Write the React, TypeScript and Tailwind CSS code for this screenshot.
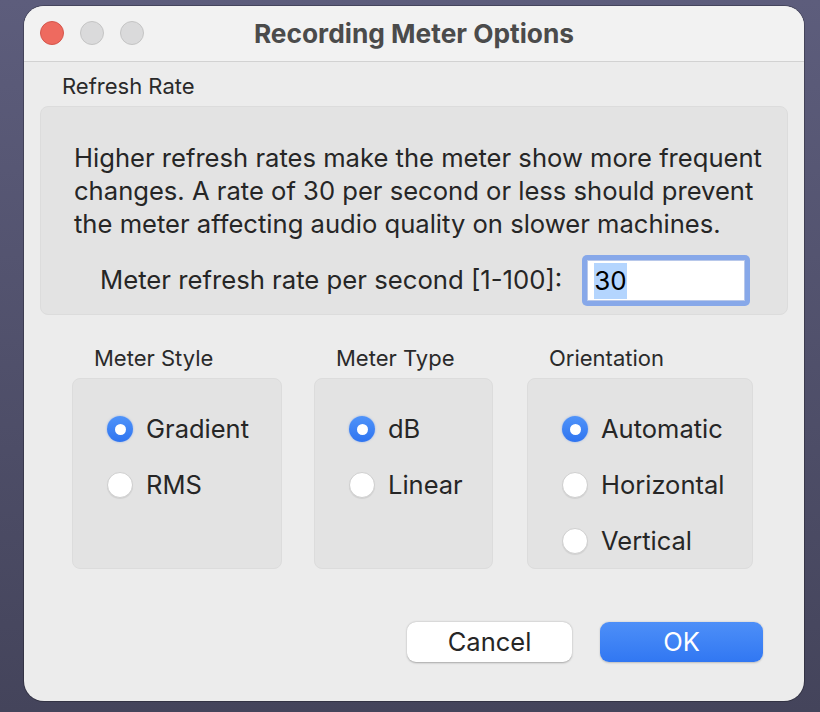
import React from "react";

const font = { fontFamily: "Inter, 'Noto Sans', sans-serif" };

function Radio({ label, checked }: { label: string; checked?: boolean }) {
  return (
    <div className="flex items-center h-[28px]">
      {checked ? (
        <div className="w-[26px] h-[26px] rounded-full bg-gradient-to-b from-[#4f93f9] to-[#2f74f0] shadow-[0_0_2px_rgba(47,116,240,0.5)] flex items-center justify-center">
          <div className="w-[11px] h-[11px] rounded-full bg-white" />
        </div>
      ) : (
        <div className="w-[26px] h-[26px] rounded-full bg-white border border-[#cfcfcf] shadow-[0_1px_1px_rgba(0,0,0,0.08)]" />
      )}
      <span className="ml-[13px] text-[25.5px] text-[#262626] leading-none">{label}</span>
    </div>
  );
}

function Group({
  title,
  width,
  children,
}: {
  title: string;
  width: string;
  children: React.ReactNode;
}) {
  return (
    <div className={`flex flex-col ${width}`}>
      <div className="pl-[22px] text-[22px] leading-[24px] text-[#2a2a2a]">{title}</div>
      <div className="mt-[8px] h-[191px] rounded-[8px] bg-[#e3e3e3] border border-[#dcdcdc] pt-[36px] pl-[34px] flex flex-col gap-[28px]">
        {children}
      </div>
    </div>
  );
}

export default function App() {
  return (
    <div
      className="w-[820px] h-[712px] bg-gradient-to-b from-[#5d5d7c] to-[#44445b] pt-[6px] pl-[24px]"
      style={font}
    >
      <div className="w-[780px] h-[695px] rounded-[20px] overflow-hidden bg-[#ececec] shadow-[0_0_0_1px_rgba(0,0,0,0.25)] flex flex-col">
        {/* title bar */}
        <div className="relative h-[56px] bg-[#f2f2f2] border-b border-[#d2d2d2] flex items-center justify-center">
          <div className="absolute left-[16px] top-[15px] flex gap-[16px]">
            <div className="w-[24px] h-[24px] rounded-full bg-[#ee6a5f] border border-[#d4564c]" />
            <div className="w-[24px] h-[24px] rounded-full bg-[#dadadb] border border-[#c4c4c4]" />
            <div className="w-[24px] h-[24px] rounded-full bg-[#dadadb] border border-[#c4c4c4]" />
          </div>
          <span className="text-[26.3px] font-bold text-[#4b4b4b]">Recording Meter Options</span>
        </div>

        {/* body */}
        <div className="flex flex-col">
          <div className="mt-[12px] pl-[38px] text-[22px] leading-[24px] text-[#2a2a2a]">Refresh Rate</div>
          <div className="mt-[8px] mx-[16px] h-[209px] rounded-[8px] bg-[#e3e3e3] border border-[#dcdcdc] pt-[34px] pl-[33px]">
            <p className="text-[25.6px] leading-[33px] text-[#262626]">
              Higher refresh rates make the meter show more frequent
              <br />
              changes. A rate of 30 per second or less should prevent
              <br />
              the meter affecting audio quality on slower machines.
            </p>
            <div className="mt-[15px] ml-[26px] flex items-center">
              <span className="text-[25.7px] text-[#262626]">Meter refresh rate per second [1-100]:</span>
              <div className="ml-[20px] w-[168px] h-[51px] rounded-[5px] bg-[#87a8e9] p-[5px]">
                <div className="w-full h-full bg-white border border-[#b8c8ea] flex items-center pl-[6px]">
                  <span className="bg-[#b4d5fe] text-[26px] leading-[36px] text-black">30</span>
                </div>
              </div>
            </div>
          </div>

          <div className="mt-[31px] ml-[48px] flex">
            <Group title="Meter Style" width="w-[210px]">
              <Radio label="Gradient" checked />
              <Radio label="RMS" />
            </Group>
            <div className="w-[32px]" />
            <Group title="Meter Type" width="w-[179px]">
              <Radio label="dB" checked />
              <Radio label="Linear" />
            </Group>
            <div className="w-[34px]" />
            <Group title="Orientation" width="w-[226px]">
              <Radio label="Automatic" checked />
              <Radio label="Horizontal" />
              <Radio label="Vertical" />
            </Group>
          </div>

          <div className="mt-[53px] mr-[41px] flex justify-end gap-[28px]">
            <button className="w-[165px] h-[40px] rounded-[9px] bg-white shadow-[0_0.5px_2px_rgba(0,0,0,0.3)] text-[25.5px] text-[#262626]">
              Cancel
            </button>
            <button className="w-[163px] h-[40px] rounded-[9px] bg-gradient-to-b from-[#4d8ff8] to-[#3177f2] shadow-[0_0.5px_2px_rgba(0,0,0,0.2)] text-[25.5px] text-white">
              OK
            </button>
          </div>
        </div>
      </div>
    </div>
  );
}
